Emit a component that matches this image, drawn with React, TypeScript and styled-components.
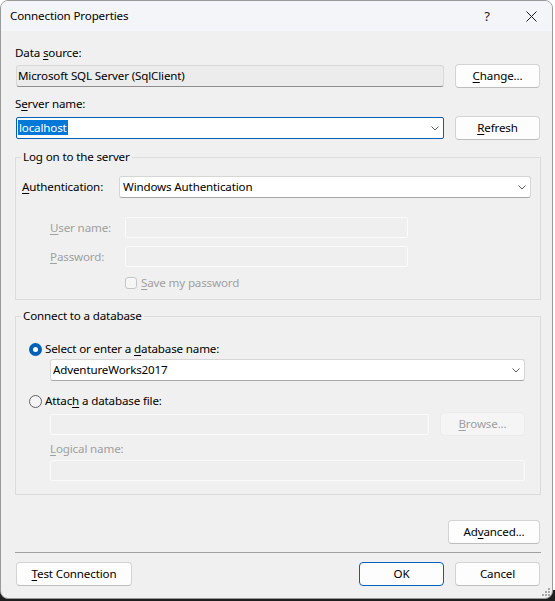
import React from 'react';
import styled, { createGlobalStyle, css } from 'styled-components';

const GlobalStyle = createGlobalStyle`
  html, body { margin: 0; padding: 0; }
  body {
    width: 555px;
    height: 601px;
    overflow: hidden;
    background: linear-gradient(to bottom, #ffffff 0, #ffffff 590px, #1e1e1e 590px);
    font-family: "Segoe UI", "Noto Sans", "Open Sans", sans-serif;
    font-size: 11.6px;
    letter-spacing: -0.15px;
    color: #000;
  }
  button { letter-spacing: inherit; }
  * { box-sizing: border-box; }
`;

const Window = styled.div`
  position: relative;
  width: 553px;
  height: 599px;
  border: 1px solid #9a9a9a;
  border-radius: 8px;
  background: #f0f0f0;
  display: flex;
  flex-direction: column;
  overflow: hidden;
`;

const TitleBar = styled.div`
  height: 30px;
  flex: none;
  display: flex;
  align-items: center;
  background: #f3f5f8;
  padding-left: 9px;
`;

const TitleText = styled.div`
  flex: 1;
  line-height: 16px;
`;

const CaptionButton = styled.div<{ $w: number }>`
  width: ${p => p.$w}px;
  height: 30px;
  display: flex;
  align-items: center;
  justify-content: center;
  font-size: 13px;
  color: #1a1a1a;
`;

const Body = styled.div`
  flex: 1;
  display: flex;
  flex-direction: column;
  padding: 14px 11px 0 14px;
`;

const Label = styled.div<{ $disabled?: boolean; $mt?: number; $mb?: number }>`
  line-height: 16px;
  height: 16px;
  white-space: nowrap;
  color: ${p => (p.$disabled ? '#a0a0a0' : '#000')};
  margin-top: ${p => p.$mt ?? 0}px;
  margin-bottom: ${p => p.$mb ?? 0}px;
`;

const Mn = styled.u`
  text-decoration-thickness: 1px;
  text-underline-offset: 2px;
`;

const FieldRow = styled.div<{ $mt?: number }>`
  display: flex;
  align-items: center;
  gap: 11px;
  height: 24px;
  padding: 0 1px;
  margin-top: ${p => p.$mt ?? 0}px;
`;

type BoxVariant = 'readonly' | 'combo' | 'focused' | 'disabled';

const TextBox = styled.div<{ $variant: BoxVariant; $h?: number; $pl?: number }>`
  display: flex;
  align-items: center;
  flex: 1;
  height: ${p => p.$h ?? 22}px;
  padding-left: ${p => p.$pl ?? 1}px;
  padding-right: 4px;
  border-radius: 3px;
  line-height: 16px;
  white-space: nowrap;
  ${p =>
    p.$variant === 'readonly' &&
    css`
      background: #ececec;
      border: 1px solid #d9d9d9;
      border-bottom-color: #8d8d8d;
    `}
  ${p =>
    p.$variant === 'combo' &&
    css`
      background: #ffffff;
      border: 1px solid #d6d6d6;
      border-bottom-color: #a8a8a8;
    `}
  ${p =>
    p.$variant === 'focused' &&
    css`
      background: #ffffff;
      border: 1px solid #005fb8;
      border-radius: 2px;
    `}
  ${p =>
    p.$variant === 'disabled' &&
    css`
      background: #efefef;
      border: 1px solid #fafafa;
      border-radius: 2px;
    `}
`;

const BoxText = styled.span`
  flex: 1;
`;

const Selected = styled.span`
  background: #0078d7;
  color: #ffffff;
  line-height: 15px;
  padding: 0 1px;
`;

const ChevronSvg = styled.svg`
  flex: none;
  display: block;
`;

const Chevron = () => (
  <ChevronSvg width="8" height="5" viewBox="0 0 8 5">
    <path d="M0.5 0.5 L4 4 L7.5 0.5" fill="none" stroke="#5c5c5c" strokeWidth="1" />
  </ChevronSvg>
);

const PushButton = styled.button<{ $w: number; $default?: boolean }>`
  width: ${p => p.$w}px;
  height: 24px;
  flex: none;
  font: inherit;
  color: #000;
  background: #fdfdfd;
  border: 1px solid #d3d3d3;
  border-bottom-color: #bdbdbd;
  border-radius: 4px;
  padding: 0;
  line-height: 16px;
  ${p =>
    p.$default &&
    css`
      border: 1px solid #005fb8;
    `}
  &:disabled {
    background: #f5f5f5;
    border: 1px solid #ebebeb;
    color: #a0a0a0;
  }
`;

const GroupBox = styled.fieldset<{ $mt: number }>`
  margin: ${p => p.$mt}px 0 0 0;
  padding: 0;
  border: 1px solid #dcdcdc;
  min-width: 0;
`;

const GroupTitle = styled.legend`
  margin-left: 5px;
  padding: 0 2px;
  line-height: 16px;
`;

const GroupContent = styled.div<{ $pad: string }>`
  display: flex;
  flex-direction: column;
  padding: ${p => p.$pad};
`;

const AuthRow = styled.div`
  display: grid;
  grid-template-columns: 97px 1fr;
  align-items: center;
`;

const CredRow = styled.div<{ $mt: number; $h: number }>`
  display: grid;
  grid-template-columns: 75px 283px;
  align-items: center;
  height: ${p => p.$h}px;
  padding-left: 28px;
  margin-top: ${p => p.$mt}px;
`;

const CheckLine = styled.div`
  grid-column: 2;
  display: flex;
  align-items: center;
  gap: 4px;
`;

const CheckBox = styled.span`
  width: 12px;
  height: 12px;
  flex: none;
  border: 1px solid #c6c6c6;
  border-radius: 3px;
  background: #f6f6f6;
`;

const RadioLine = styled.div<{ $mt?: number }>`
  display: flex;
  align-items: center;
  gap: 3px;
  height: 16px;
  margin-top: ${p => p.$mt ?? 0}px;
  line-height: 16px;
`;

const Radio = styled.span<{ $checked?: boolean }>`
  width: 13px;
  height: 13px;
  flex: none;
  border-radius: 50%;
  ${p =>
    p.$checked
      ? css`
          background: #005fb8;
          display: flex;
          align-items: center;
          justify-content: center;
          &::after {
            content: '';
            width: 5px;
            height: 5px;
            border-radius: 50%;
            background: #ffffff;
          }
        `
      : css`
          background: #f5f5f5;
          border: 1px solid #616161;
        `}
`;

const Indented = styled.div<{ $mt?: number }>`
  margin-left: 21px;
  margin-top: ${p => p.$mt ?? 0}px;
  display: flex;
  align-items: center;
  gap: 11px;
`;

const ActionRow = styled.div<{ $mt: number }>`
  display: flex;
  align-items: center;
  padding: 0 1px;
  margin-top: ${p => p.$mt}px;
  gap: 11px;
`;

const Spacer = styled.div`
  flex: 1;
`;

const Separator = styled.div`
  height: 1px;
  background: #a0a0a0;
  margin-top: 8px;
`;

const Grip = styled.svg`
  position: absolute;
  right: 2px;
  bottom: 2px;
`;

export default function App() {
  return (
    <>
      <GlobalStyle />
      <Window>
        <TitleBar>
          <TitleText>Connection Properties</TitleText>
          <CaptionButton $w={46}>?</CaptionButton>
          <CaptionButton $w={42}>
            <svg width="11" height="11" viewBox="0 0 11 11">
              <path d="M0.5 0.5 L10.5 10.5 M10.5 0.5 L0.5 10.5" stroke="#1a1a1a" strokeWidth="1" />
            </svg>
          </CaptionButton>
        </TitleBar>
        <Body>
          <Label $mb={3}>
            Data <Mn>s</Mn>ource:
          </Label>
          <FieldRow>
            <TextBox $variant="readonly">
              <BoxText>Microsoft SQL Server (SqlClient)</BoxText>
            </TextBox>
            <PushButton $w={85}>
              <Mn>C</Mn>hange...
            </PushButton>
          </FieldRow>

          <Label $mt={8} $mb={4}>
            S<Mn>e</Mn>rver name:
          </Label>
          <FieldRow>
            <TextBox $variant="focused" $pl={1}>
              <BoxText>
                <Selected>localhost</Selected>
              </BoxText>
              <Chevron />
            </TextBox>
            <PushButton $w={85}>
              <Mn>R</Mn>efresh
            </PushButton>
          </FieldRow>

          <GroupBox $mt={9}>
            <GroupTitle>Log on to the server</GroupTitle>
            <GroupContent $pad="11px 9px 8px 6px">
              <AuthRow>
                <Label>
                  <Mn>A</Mn>uthentication:
                </Label>
                <TextBox $variant="combo" $pl={3}>
                  <BoxText>Windows Authentication</BoxText>
                  <Chevron />
                </TextBox>
              </AuthRow>
              <CredRow $mt={19} $h={21}>
                <Label $disabled>
                  <Mn>U</Mn>ser name:
                </Label>
                <TextBox $variant="disabled" $h={21} />
              </CredRow>
              <CredRow $mt={8} $h={21}>
                <Label $disabled>
                  <Mn>P</Mn>assword:
                </Label>
                <TextBox $variant="disabled" $h={21} />
              </CredRow>
              <CredRow $mt={8} $h={16}>
                <CheckLine>
                  <CheckBox />
                  <Label $disabled>
                    <Mn>S</Mn>ave my password
                  </Label>
                </CheckLine>
              </CredRow>
            </GroupContent>
          </GroupBox>

          <GroupBox $mt={8}>
            <GroupTitle>Connect to a database</GroupTitle>
            <GroupContent $pad="17px 15px 13px 13px">
              <RadioLine>
                <Radio $checked />
                <span>
                  Select or enter a <Mn>d</Mn>atabase name:
                </span>
              </RadioLine>
              <Indented $mt={2}>
                <TextBox $variant="combo" $pl={2}>
                  <BoxText>AdventureWorks2017</BoxText>
                  <Chevron />
                </TextBox>
              </Indented>
              <RadioLine $mt={12}>
                <Radio />
                <span>
                  Attac<Mn>h</Mn> a database file:
                </span>
              </RadioLine>
              <Indented $mt={3}>
                <TextBox $variant="disabled" $h={21} />
                <PushButton $w={85} disabled>
                  <Mn>B</Mn>rowse...
                </PushButton>
              </Indented>
              <Indented $mt={5}>
                <Label $disabled>
                  <Mn>L</Mn>ogical name:
                </Label>
              </Indented>
              <Indented $mt={3}>
                <TextBox $variant="disabled" $h={21} />
              </Indented>
            </GroupContent>
          </GroupBox>

          <ActionRow $mt={25}>
            <Spacer />
            <PushButton $w={92}>
              Ad<Mn>v</Mn>anced...
            </PushButton>
          </ActionRow>

          <Separator />

          <ActionRow $mt={9}>
            <PushButton $w={116}>
              <Mn>T</Mn>est Connection
            </PushButton>
            <Spacer />
            <PushButton $w={85} $default>
              OK
            </PushButton>
            <PushButton $w={85}>Cancel</PushButton>
          </ActionRow>
        </Body>
        <Grip width="9" height="9" viewBox="0 0 9 9">
          <g fill="#a8a8a8">
            <rect x="7" y="1" width="2" height="2" />
            <rect x="4" y="4" width="2" height="2" />
            <rect x="7" y="4" width="2" height="2" />
            <rect x="1" y="7" width="2" height="2" />
            <rect x="4" y="7" width="2" height="2" />
            <rect x="7" y="7" width="2" height="2" />
          </g>
        </Grip>
      </Window>
    </>
  );
}
